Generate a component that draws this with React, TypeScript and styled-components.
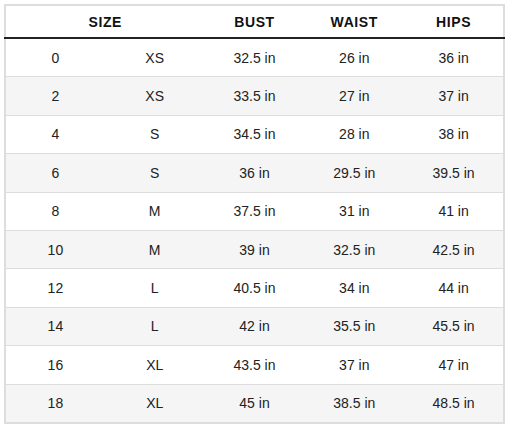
import styled, { createGlobalStyle } from "styled-components"

const GlobalStyle = createGlobalStyle`
  html, body {
    margin: 0;
    padding: 0;
    background: #ffffff;
  }
  body {
    font-family: "Liberation Sans", Arial, sans-serif;
    color: #222222;
  }
`

const lineColor: string = "#dddddd"

const Page = styled.div`
  padding: 4px 7px 4px 4px;
`

const Table = styled.table`
  width: 501px;
  border-collapse: collapse;
  border: 2px solid ${lineColor};
  table-layout: fixed;
  font-size: 14px;
`

const HeadCell = styled.th`
  height: 31px;
  padding: 0;
  text-align: center;
  font-weight: bold;
  letter-spacing: 0.6px;
  color: #111111;
  border-bottom: 2px solid #222222;
`

const Row = styled.tr<{ $shaded: boolean }>`
  background: ${props => (props.$shaded ? "#f5f5f5" : "#ffffff")};
  border-top: 1px solid ${lineColor};
`

const Cell = styled.td`
  height: 37.4px;
  padding: 0;
  text-align: center;
  color: #222222;
`

type SizeRow = {
  num: string
  letter: string
  bust: string
  waist: string
  hips: string
}

const rows: SizeRow[] = [
  { num: "0", letter: "XS", bust: "32.5", waist: "26", hips: "36" },
  { num: "2", letter: "XS", bust: "33.5", waist: "27", hips: "37" },
  { num: "4", letter: "S", bust: "34.5", waist: "28", hips: "38" },
  { num: "6", letter: "S", bust: "36", waist: "29.5", hips: "39.5" },
  { num: "8", letter: "M", bust: "37.5", waist: "31", hips: "41" },
  { num: "10", letter: "M", bust: "39", waist: "32.5", hips: "42.5" },
  { num: "12", letter: "L", bust: "40.5", waist: "34", hips: "44" },
  { num: "14", letter: "L", bust: "42", waist: "35.5", hips: "45.5" },
  { num: "16", letter: "XL", bust: "43.5", waist: "37", hips: "47" },
  { num: "18", letter: "XL", bust: "45", waist: "38.5", hips: "48.5" },
]

export default function App() {
  return (
    <Page>
      <GlobalStyle />
      <Table>
        <thead>
          <tr>
            <HeadCell colSpan={2}>SIZE</HeadCell>
            <HeadCell>BUST</HeadCell>
            <HeadCell>WAIST</HeadCell>
            <HeadCell>HIPS</HeadCell>
          </tr>
        </thead>
        <tbody>
          {rows.map((r, i) => (
            <Row key={r.num} $shaded={i % 2 === 1}>
              <Cell>{r.num}</Cell>
              <Cell>{r.letter}</Cell>
              <Cell>{r.bust} in</Cell>
              <Cell>{r.waist} in</Cell>
              <Cell>{r.hips} in</Cell>
            </Row>
          ))}
        </tbody>
      </Table>
    </Page>
  )
}
